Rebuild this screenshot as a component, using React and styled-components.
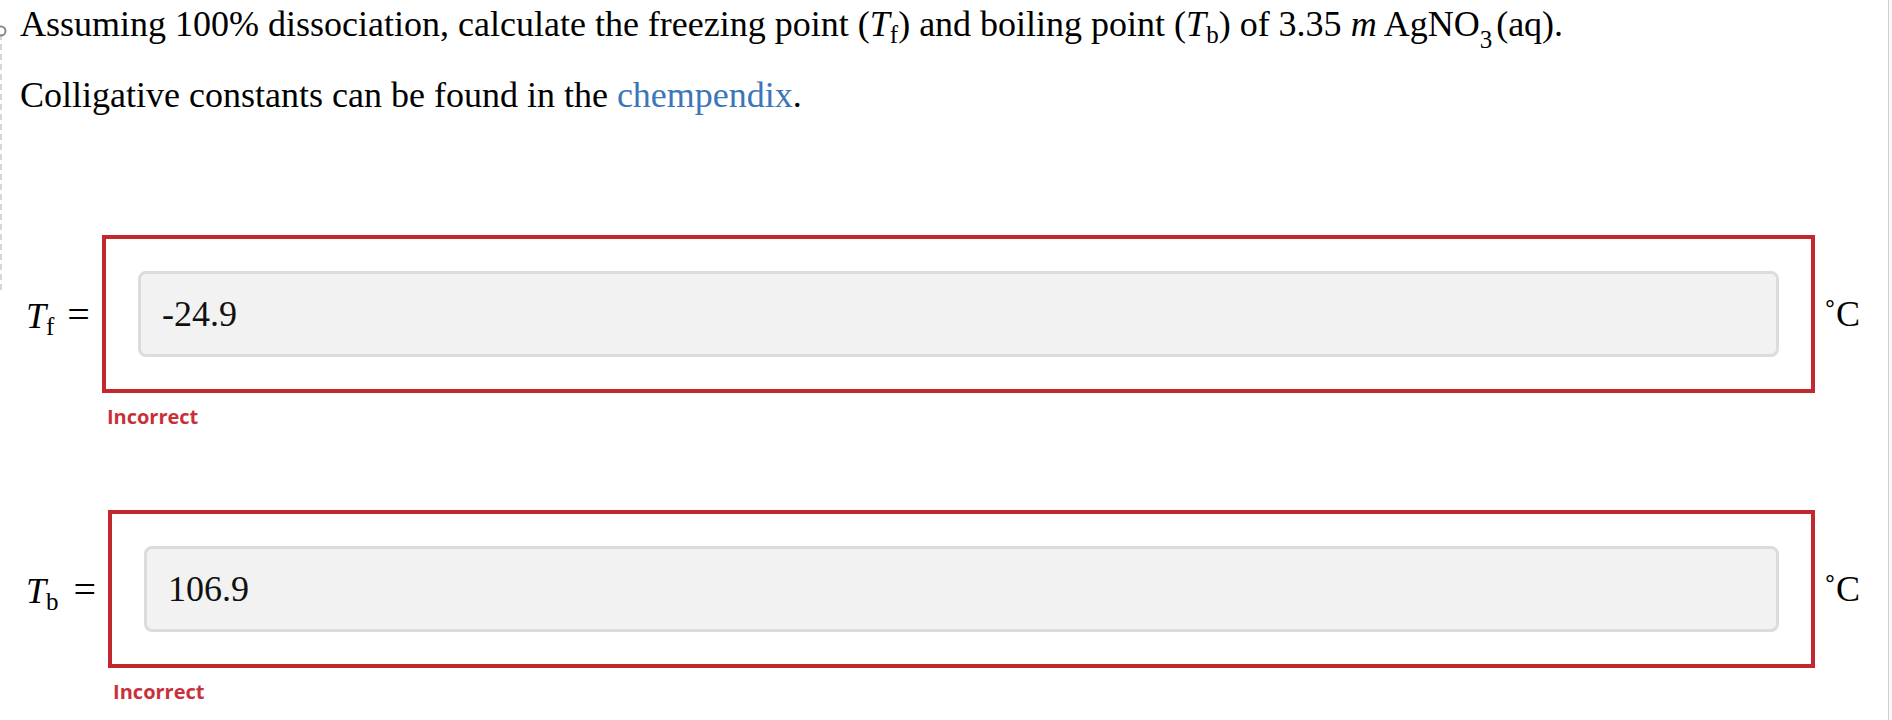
import styled, { createGlobalStyle } from "styled-components";

const GlobalStyle = createGlobalStyle`
  html, body {
    margin: 0;
    padding: 0;
    background: #fafafa;
  }
  body {
    font-family: "Liberation Serif", "Times New Roman", serif;
    color: #000;
  }
`;

const Page = styled.div`
  position: relative;
  display: flex;
  width: 1889px;
  min-height: 720px;
  box-sizing: border-box;
  border-right: 1px solid #cfcfcf;
  background: #fff;
`;

const Rail = styled.div`
  position: relative;
  width: 20px;
  flex: none;
`;

const RailDots = styled.div`
  margin-top: 34px;
  width: 0;
  height: 256px;
  border-left: 2px dashed #d6d6d6;
`;

const RailKnob = styled.svg`
  position: absolute;
  top: 24px;
  left: 0;
`;

const Content = styled.div`
  flex: 1;
  padding: 4px 28px 0 0;
`;

const Para = styled.p`
  margin: 0 0 31px;
  font-size: 36px;
  line-height: 40px;
  white-space: nowrap;
`;

const Link = styled.a`
  color: #3d76b8;
  text-decoration: none;
`;

const Sub = styled.span`
  font-size: 25px;
  line-height: 0;
  vertical-align: ${(p) => p.$drop || -7}px;
  margin-right: ${(p) => p.$gap || 0}px;
`;

const Question = styled.div`
  display: grid;
  grid-template-columns: auto 1fr auto;
  column-gap: 9px;
  align-items: center;
  margin-top: ${(p) => p.$top}px;
`;

const Label = styled.div`
  padding-left: 6px;
  font-size: 36px;
  white-space: nowrap;
`;

const Eq = styled.span`
  margin-left: ${(p) => p.$space}px;
  margin-right: 3px;
  font-size: 40px;
`;

const AnswerBox = styled.div`
  border: 4px solid #c2282e;
  padding: 32px;
`;

const AnswerInput = styled.input`
  display: block;
  width: 100%;
  height: 86px;
  box-sizing: border-box;
  padding: 0 21px;
  border: 3px solid #dcdcdc;
  border-radius: 8px;
  background: #f2f2f2;
  font-family: "Liberation Serif", "Times New Roman", serif;
  font-size: 36px;
  color: #111;
  outline: none;
`;

const Unit = styled.div`
  font-size: 36px;
  width: 36px;
  white-space: nowrap;
`;

const Feedback = styled.div`
  grid-column: 2;
  margin-top: 10px;
  padding-left: 5px;
  font-family: "Open Sans", "Liberation Sans", sans-serif;
  font-weight: 700;
  font-size: 20px;
  line-height: 27px;
  color: #c8313a;
`;

function AnswerRow({ sub, space, value, top }) {
  return (
    <Question $top={top}>
      <Label>
        <i>T</i>
        <Sub $drop={-7}>{sub}</Sub>
        <Eq $space={space}>=</Eq>
      </Label>
      <AnswerBox>
        <AnswerInput type="text" defaultValue={value} readOnly />
      </AnswerBox>
      <Unit>˚C</Unit>
      <Feedback>Incorrect</Feedback>
    </Question>
  );
}

export default function App() {
  return (
    <>
      <GlobalStyle />
      <Page>
        <Rail>
          <RailKnob width="8" height="14" viewBox="0 0 8 14">
            <circle cx="1" cy="7" r="4.5" fill="none" stroke="#8a8a8a" strokeWidth="2" />
          </RailKnob>
          <RailDots />
        </Rail>
        <Content>
          <Para>
            Assuming 100% dissociation, calculate the freezing point (<i>T</i>
            <Sub>f</Sub>) and boiling point (<i>T</i>
            <Sub>b</Sub>) of 3.35 <i>m</i> AgNO<Sub $drop={-12} $gap={4}>3</Sub>(aq).
          </Para>
          <Para>
            Colligative constants can be found in the <Link href="#">chempendix</Link>.
          </Para>
          <AnswerRow sub="f" space={13} value="-24.9" top={120} />
          <AnswerRow sub="b" space={15} value="106.9" top={80} />
        </Content>
      </Page>
    </>
  );
}
